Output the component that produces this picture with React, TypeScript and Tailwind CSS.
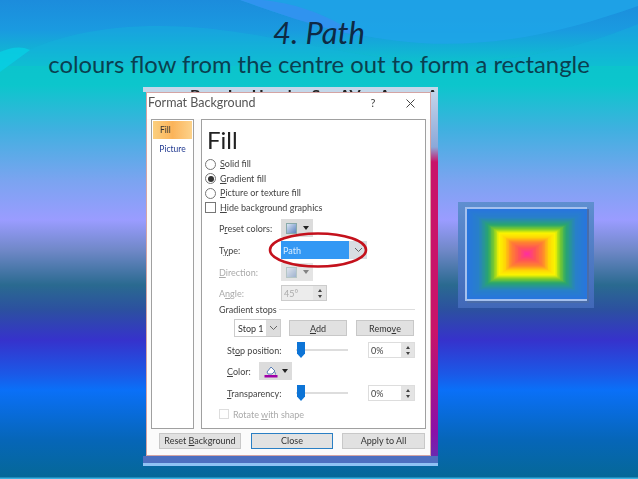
const stops: [number, number[]][] = [
  [0, [40, 118, 222]],
  [0.18, [40, 128, 200]],
  [0.34, [40, 165, 110]],
  [0.44, [130, 205, 40]],
  [0.52, [250, 245, 0]],
  [0.62, [255, 215, 5]],
  [0.72, [255, 135, 45]],
  [0.85, [255, 85, 85]],
  [1, [255, 40, 170]],
];
function colorAt(t: number) {
  for (let i = 1; i < stops.length; i++) {
    if (t <= stops[i][0]) {
      const [a, ca] = stops[i - 1];
      const [b, cb] = stops[i];
      const k = (t - a) / (b - a);
      return `rgb(${ca.map((v, j) => Math.round(v + (cb[j] - v) * k)).join(",")})`;
    }
  }
  return "rgb(255,40,170)";
}

function PathGradient() {
  const rects = Array.from({ length: 40 }, (_, i) => i / 40);
  return (
    <svg width="120" height="90" viewBox="0 0 120 90" className="block">
      {rects.map((t) => (
        <rect key={t} x={t * 60} y={t * 45} width={120 - t * 120} height={90 - t * 90} fill={colorAt(t)} />
      ))}
    </svg>
  );
}

function Radio({ on, u, rest }: { on?: boolean; u: string; rest: string }) {
  return (
    <div className="flex h-[14.5px] items-center">
      <span className="flex h-[11px] w-[11px] items-center justify-center rounded-full border border-[#777] bg-white">
        {on && <span className="h-[6px] w-[6px] rounded-full bg-[#333]" />}
      </span>
      <span className="ml-[4px] text-[9px] text-[#444]">
        <span className="underline">{u}</span>
        {rest}
      </span>
    </div>
  );
}

function Caret() {
  return <span className="block h-0 w-0 border-x-[3.5px] border-t-[4px] border-x-transparent border-t-[#222]" />;
}

function Chevron() {
  return (
    <svg width="9" height="6" viewBox="0 0 9 6" fill="none" stroke="#666" strokeWidth="1">
      <path d="M1 1l3.5 3.5L8 1" />
    </svg>
  );
}

function Swatch({ dim }: { dim?: boolean }) {
  return (
    <span className={`flex h-[18px] w-[32px] items-center justify-center gap-[6px] ${dim ? "bg-[#e4e4e4]" : "bg-[#dcdcdc]"}`}>
      <span className={`h-[11px] w-[11px] border border-[#8aa] bg-gradient-to-br from-[#dce6f4] to-[#5d83bd] ${dim ? "opacity-50" : ""}`} />
      <span className={dim ? "opacity-50" : ""}>
        <Caret />
      </span>
    </span>
  );
}

function Spin() {
  return (
    <span className="flex h-full w-[13px] flex-col items-center justify-center gap-[3px] bg-[#e4e4e4]">
      <span className="h-0 w-0 border-x-[2.5px] border-b-[3px] border-x-transparent border-b-[#444]" />
      <span className="h-0 w-0 border-x-[2.5px] border-t-[3px] border-x-transparent border-t-[#444]" />
    </span>
  );
}

function Slider({ children }: { children: React.ReactNode }) {
  return (
    <div className="flex h-[16px] items-center">
      <span className="w-[52px] text-[9px] whitespace-nowrap text-[#444]">{children}</span>
      <span className="relative ml-[17px] h-[2px] w-[52px] bg-[#ddd]">
        <svg width="10" height="16" viewBox="0 0 10 16" className="absolute -top-[7px] left-0">
          <path d="M1 0h8v11.500L5 16 1 11.500z" fill="#0d74d6" />
        </svg>
      </span>
      <span className="ml-[20px] flex h-[16px] w-[47px] items-center justify-between border border-[#ddd] bg-white pl-[2px] text-[9px] text-[#444]">
        0%
        <Spin />
      </span>
    </div>
  );
}

function Btn({ children, w, primary }: { children: React.ReactNode; w: string; primary?: boolean }) {
  return (
    <span
      className={`flex h-[16px] items-center justify-center text-[9px] text-[#333] ${w} ${
        primary ? "border-[1.5px] border-[#2a7fc4] bg-[#e2e2e2]" : "border border-[#c8c8c8] bg-[#e1e1e1]"
      }`}
    >
      {children}
    </span>
  );
}

function Dialog() {
  return (
    <div className="relative flex h-[364px] w-[285px] shrink-0 flex-col border border-[#d4a4a4] bg-[#fbfbfb] blur-[0.5px]">
      <div className="flex h-[26px] shrink-0 items-start bg-white pl-[1px]">
        <span className="text-[12.500px] leading-[20px] text-[#555]">Format Background</span>
        <span className="ml-[115px] text-[11px] leading-[20px] text-[#444]">?</span>
        <svg width="9" height="9" viewBox="0 0 9 9" stroke="#444" strokeWidth="1" className="mt-[6px] ml-[30px]">
          <path d="M.5.5l8 8M8.500.5l-8 8" />
        </svg>
      </div>
      <div className="flex h-[310px] shrink-0 pl-[4px]">
        <div className="flex w-[43px] flex-col items-center border border-[#a0a0a0] bg-white pt-[1px]">
          <span className="flex h-[18px] w-[39px] items-center bg-gradient-to-r from-[#fbcf7e] via-[#fbb45a] to-[#fcd28a] pl-[7px] text-[8.500px] text-[#333]">Fill</span>
          <span className="mt-[3px] text-[8.500px] leading-[14px] text-[#223a90]">Picture</span>
        </div>
        <div className="ml-[7px] flex w-[225px] flex-col border border-[#a0a0a0] bg-white pl-[3px]">
          <div className="mt-[6px] ml-[2px] h-[27px] text-[24px] leading-[27px] text-[#222]">Fill</div>
          <div className="mt-[3.750px] flex flex-col">
            <Radio u="S" rest="olid fill" />
            <Radio on u="G" rest="radient fill" />
            <Radio u="P" rest="icture or texture fill" />
            <div className="flex h-[15px] items-center">
              <span className="h-[11px] w-[11px] border border-[#777] bg-white" />
              <span className="ml-[4px] text-[9px] text-[#444]">
                <span className="underline">H</span>ide background graphics
              </span>
            </div>
          </div>
          <div className="ml-[14px] flex flex-col">
            <div className="mt-[4px] flex h-[18px] items-center">
              <span className="w-[62px] text-[9px] text-[#444]">
                P<span className="underline">r</span>eset colors:
              </span>
              <Swatch />
            </div>
            <div className="relative mt-[4px] flex h-[18px] items-center">
              <span className="w-[62px] text-[9px] text-[#444]">
                T<span className="underline">y</span>pe:
              </span>
              <span className="flex h-[18px] w-[68px] items-center bg-[#3398f4] pl-[2px] text-[9px] text-[#d8ecff]">Path</span>
              <span className="flex h-[18px] w-[18px] items-center justify-center bg-[#d8dde2]">
                <Chevron />
              </span>
              <svg width="102" height="38" viewBox="0 0 102 38" fill="none" className="absolute top-[-10px] left-[49px]">
                <ellipse cx="50" cy="19" rx="48" ry="16.500" stroke="#c4111c" strokeWidth="2.600" />
              </svg>
            </div>
            <div className="mt-[4px] flex h-[18px] items-center">
              <span className="w-[62px] text-[9px] text-[#aaa]">
                <span className="underline">D</span>irection:
              </span>
              <Swatch dim />
            </div>
            <div className="mt-[4px] flex h-[16px] items-center">
              <span className="w-[62px] text-[9px] text-[#aaa]">
                A<span className="underline">n</span>gle:
              </span>
              <span className="flex h-[16px] w-[46px] items-center justify-between border border-[#ccc] bg-[#ececec] pl-[2px] text-[9px] text-[#aaa]">
                45°
                <Spin />
              </span>
            </div>
            <div className="mt-[1px] flex h-[15px] items-center">
              <span className="w-[57px] text-[9px] whitespace-nowrap text-[#444]">Gradient stops</span>
              <span className="ml-[3px] h-px w-[136px] bg-[#ddd]" />
            </div>
            <div className="mt-[2px] flex h-[18px] items-center pl-[15px]">
              <span className="flex h-[18px] w-[47px] items-center justify-between border border-[#ccc] bg-white pl-[3px] text-[9px] text-[#333]">
                Stop 1
                <span className="flex h-full w-[14px] items-center justify-center bg-[#ddd]">
                  <Chevron />
                </span>
              </span>
              <span className="ml-[8px]">
                <Btn w="w-[58px]">
                  <span>
                    <span className="underline">A</span>dd
                  </span>
                </Btn>
              </span>
              <span className="ml-[9px]">
                <Btn w="w-[58px]">
                  <span>
                    Remo<span className="underline">v</span>e
                  </span>
                </Btn>
              </span>
            </div>
            <div className="mt-[5px] flex flex-col pl-[8px]">
              <Slider>
                St<span className="underline">o</span>p position:
              </Slider>
              <div className="mt-[4px] flex h-[18px] items-center">
                <span className="w-[32px] text-[9px] text-[#444]">
                  <span className="underline">C</span>olor:
                </span>
                <span className="flex h-[18px] w-[33px] items-center justify-center gap-[4px] bg-[#dcdcdc]">
                  <svg width="14" height="14" viewBox="0 0 14 14">
                    <path d="M3 8l4-5 4 4-3 3H4z" fill="#fff" stroke="#5a7fb5" strokeWidth="1" />
                    <path d="M10 7c1 1.500 2 2.500 1.500 3.500" stroke="#5a7fb5" fill="none" />
                    <rect x="0.500" y="11" width="13" height="2.500" fill="#a000a8" />
                  </svg>
                  <Caret />
                </span>
              </div>
              <div className="mt-[5px]">
                <Slider>
                  <span className="underline">T</span>ransparency:
                </Slider>
              </div>
            </div>
            <div className="mt-[7px] flex h-[12px] items-center">
              <span className="h-[10px] w-[10px] border border-[#ddd] bg-white" />
              <span className="ml-[4px] text-[9px] text-[#aaa]">
                Rotate <span className="underline">w</span>ith shape
              </span>
            </div>
          </div>
        </div>
      </div>
      <div className="mt-[4px] flex pl-[12px]">
        <Btn w="w-[82px]">
          <span>
            Reset <span className="underline">B</span>ackground
          </span>
        </Btn>
        <span className="ml-[10px]">
          <Btn w="w-[82px]" primary>
            Close
          </Btn>
        </span>
        <span className="ml-[9px]">
          <Btn w="w-[83px]">Apply to All</Btn>
        </span>
      </div>
    </div>
  );
}

function Ribbon() {
  return (
    <div className="flex h-[5px] items-start overflow-hidden bg-[#c4d8ea] pl-[47px] text-[16px] leading-[16px] font-bold text-[#222] blur-[0.35px]">
      <span className="w-[38px]">B</span>
      <span className="w-[24px]">I</span>
      <span className="w-[28px]">U</span>
      <span className="w-[32px]">ab</span>
      <span className="w-[28px]">S</span>
      <span className="w-[40px]">AV</span>
      <span className="w-[48px]">A</span>
      <span>A</span>
    </div>
  );
}

export default function App() {
  return (
    <div
      className="relative flex h-[479px] w-[638px] flex-col overflow-hidden bg-[linear-gradient(180deg,#1c8cdc_0px,#1a9ae0_30px,#0cc4cc_65px,#0cc6cc_85px,#40b0e0_130px,#7aa4f0_180px,#9a9cff_220px,#7088c8_250px,#2a6a90_285px,#2c50a0_310px,#3632cc_340px,#1a5ae8_375px,#0a70f8_390px,#0666b8_440px,#056898_477px,#3ab0e0_478px)]"
      style={{ fontFamily: 'Lato,"Open Sans",sans-serif' }}
    >
      <svg width="638" height="90" viewBox="0 0 638 90" className="absolute top-0 left-0" fill="none">
        <path d="M0 64C50 36 100 26 160 26 260 26 340 60 440 62 520 64 590 44 638 24V66H0z" fill="#14b4dc" opacity="0.4" />
        <path d="M240 0C290 18 350 38 420 43 500 48 570 30 638 6V0z" fill="#1ea4e8" opacity="0.85" />
        <path d="M240 0C280 14 320 28 360 36 320 10 290 3 262 0z" fill="#3490f0" opacity="0.85" />
        <path d="M0 72L30 50C20 45 10 48 0 52z" fill="#08d0e4" opacity="0.8" />
      </svg>
      <div className="relative flex h-[87px] shrink-0 flex-col items-center">
        <h1 className="mt-[15px] h-[35px] text-[31px] leading-[35px] font-normal text-[#0e2a44] italic">4. Path</h1>
        <p className="mt-[1px] text-[23.800px] leading-[27px] whitespace-nowrap text-[#0a3f50]">colours flow from the centre out to form a rectangle</p>
      </div>
      <div className="relative flex items-start pl-[143px]">
        <div className="flex h-[379px] w-[295px] flex-col">
          <Ribbon />
          <div className="flex h-[364px] shrink-0">
            <div className="w-[3px] shrink-0" />
            <Dialog />
            <div className="w-[7px] bg-[linear-gradient(180deg,#c4d4ea_0px,#8ca8d8_55px,#c8146a_70px,#c8146a_240px,#8a10a8_340px,#6a2ab0_364px)]" />
          </div>
          <div className="h-[7px] bg-[#4d6fc0]" />
          <div className="h-[3px] bg-[#8fc2f4]" />
        </div>
        <div className="mt-[115px] ml-[20px] h-[106px] w-[136px] bg-gradient-to-b from-[#5f8fd0] to-[#4168b8] px-[7px] py-[5px]">
          <div className="border-2 border-[#a4c0ee] shadow-[2px_2px_0_#4a6ca8]">
            <PathGradient />
          </div>
        </div>
      </div>
    </div>
  );
}
